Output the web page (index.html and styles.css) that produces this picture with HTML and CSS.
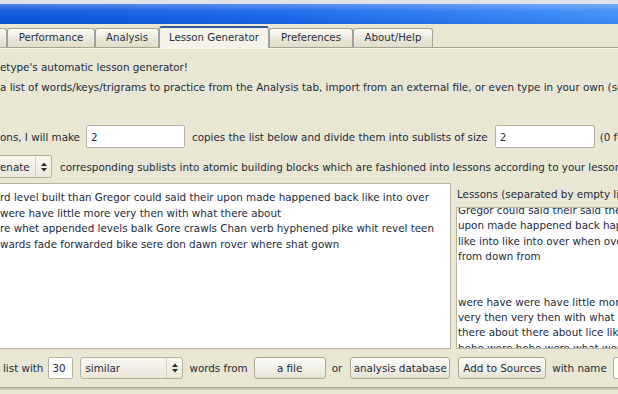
FILE: index.html
```html
<!DOCTYPE html>
<html>
<head>
<meta charset="utf-8">
<link rel="stylesheet" href="styles.css">
</head>
<body>
<div class="win">
  <div class="frame-top"></div>
  <div class="titlebar"></div>
  <div class="tabbar">
    <div class="tab tab-cut"></div>
    <div class="tab tab-perf">Performance</div>
    <div class="tab tab-analysis">Analysis</div>
    <div class="tab tab-active tab-lesson">Lesson Generator</div>
    <div class="tab tab-prefs">Preferences</div>
    <div class="tab tab-about">About/Help</div>
  </div>
  <div class="pane">
    <p class="line">etype's automatic lesson generator!</p>
    <p class="line">a list of words/keys/trigrams to practice from the Analysis tab, import from an external file, or even type in your own (separated by space).</p>
    <div class="row row-copies">
      <span class="label">ons, I will make</span>
      <input class="field field-copies" value="2">
      <span class="label">copies the list below and divide them into sublists of size</span>
      <input class="field field-size" value="2">
      <span class="label">(0 for no division).</span>
    </div>
    <div class="row row-mode">
      <div class="combo combo-mode">
        <span class="combo-text">enate</span>
        <span class="combo-btn">
          <svg width="6" height="10" viewBox="0 0 6 10"><path d="M0 4 L3 0.5 L6 4Z M0 6 L3 9.5 L6 6Z" fill="#2b2b2b"/></svg>
        </span>
      </div>
      <span class="label">corresponding sublists into atomic building blocks which are fashioned into lessons according to your lesson options.</span>
    </div>
    <div class="panels">
      <div class="textbox source">
        <div class="tline">rd level built than Gregor could said their upon made happened back like into over</div>
        <div class="tline">were have little more very then with what there about</div>
        <div class="tline">re whet appended levels balk Gore crawls Chan verb hyphened pike whit revel teen</div>
        <div class="tline">wards fade forwarded bike sere don dawn rover where shat gown</div>
      </div>
      <div class="lessons-col">
        <div class="lessons-label">Lessons (separated by empty lines):</div>
        <div class="textbox lessons">
          <div class="scroll">
            <div class="tline">Gregor could said their said their</div>
            <div class="tline">upon made happened back happened</div>
            <div class="tline">like into like into over when over</div>
            <div class="tline">from down from</div>
            <div class="tline">&nbsp;</div>
            <div class="tline">&nbsp;</div>
            <div class="tline">were have were have little more</div>
            <div class="tline">very then very then with what</div>
            <div class="tline">there about there about lice like</div>
            <div class="tline">hehe were hehe were what were</div>
          </div>
        </div>
      </div>
    </div>
    <div class="row row-bottom">
      <span class="label">list with</span>
      <input class="field field-count" value="30">
      <div class="combo combo-similar">
        <span class="combo-text">similar</span>
        <span class="combo-btn">
          <svg width="6" height="10" viewBox="0 0 6 10"><path d="M0 4 L3 0.5 L6 4Z M0 6 L3 9.5 L6 6Z" fill="#2b2b2b"/></svg>
        </span>
      </div>
      <span class="label">words from</span>
      <button class="btn btn-file">a file</button>
      <span class="label label-or">or</span>
      <button class="btn btn-db">analysis database</button>
      <button class="btn btn-add">Add to Sources</button>
      <span class="label">with name</span>
      <input class="field field-name" value="">
    </div>
    <div class="footer"></div>
  </div>
</div>
</body>
</html>
```

FILE: styles.css
```css
* { box-sizing: border-box; }
html, body { margin: 0; padding: 0; }
body { background: #e9e6d4; }

.win {
  width: 618px;
  height: 394px;
  overflow: hidden;
  background: #e9e6d4;
  font-family: "DejaVu Sans", sans-serif;
  font-size: 10px;
  color: #222a3a;
  display: flex;
  flex-direction: column;
}

.frame-top { flex: none; height: 4px; background: #dfe2ea; }
.titlebar {
  flex: none;
  height: 20px;
  background:
    linear-gradient(180deg, rgba(255,255,255,0.28) 0, rgba(255,255,255,0.05) 35%, rgba(0,0,0,0) 70%, rgba(0,0,40,0.08) 100%),
    linear-gradient(90deg, #0b56dc 0, #1a67ec 45%, #3f90f7 100%);
}

.tabbar {
  flex: none;
  margin-top: 2px;
  height: 22px;
  display: flex;
  align-items: flex-end;
  border-bottom: 1px solid #a5a392;
}
.tab {
  height: 19px;
  line-height: 18px;
  text-align: center;
  white-space: nowrap;
  border: 1px solid #9ea39e;
  border-bottom: none;
  border-radius: 3px 3px 0 0;
  background: linear-gradient(180deg, #fbfbf7 0, #e9e6d7 60%, #e0ddcb 100%);
  color: #2a3140;
  font-size: 10.2px;
}
.tab-cut { width: 7px; border-left: none; border-radius: 0 3px 0 0; }
.tab-perf { width: 88px; }
.tab-analysis { width: 64px; }
.tab-lesson { width: 110px; }
.tab-prefs { width: 84px; }
.tab-about { width: 80px; }
.tab-active {
  height: 22px;
  line-height: 19px;
  margin-bottom: -1px;
  background: #f4f2e9;
  border-top: 2px solid #2f5a9e;
}

.pane {
  flex: 1;
  display: flex;
  flex-direction: column;
  padding-top: 8px;
  border-top: 1px solid #f8f7f1;
  font-size: 10.35px;
}

.line {
  margin: 0;
  height: 20px;
  line-height: 20px;
  white-space: nowrap;
}

.row {
  display: flex;
  align-items: center;
  white-space: nowrap;
  flex: none;
}
.row-copies { margin-top: 28px; height: 23px; }
.row-mode { margin-top: 7px; height: 23px; }
.row-bottom { margin-top: 8px; height: 22px; padding-left: 3px; }

.label { flex: none; }

.field {
  flex: none;
  height: 23px;
  border: 1px solid #b4b1a2;
  border-radius: 2px;
  background: #fff;
  font: inherit;
  color: inherit;
  padding: 0 4px;
  margin: 0;
}
.field-copies { width: 99px; margin: 0 7px 0 6px; }
.field-size { width: 100px; margin: 0 5px 0 7px; }
.field-count { width: 25px; height: 22px; margin: 0 7px 0 5px; padding: 0 3px; }
.field-name { width: 40px; height: 22px; margin-left: 6px; }

.combo {
  flex: none;
  display: flex;
  align-items: center;
  height: 23px;
  border: 1px solid #b4b1a2;
  border-radius: 3px;
  background: linear-gradient(180deg, #f7f6f0 0, #ebe8da 100%);
}
.combo-text { flex: 1; padding-left: 4px; }
.combo-btn {
  display: flex;
  align-items: center;
  justify-content: center;
  width: 16px;
  height: 100%;
  border-left: 1px solid #d4d1c1;
}
.combo-mode { width: 52px; margin-right: 8px; border-left: none; border-radius: 0 3px 3px 0; }
.combo-mode .combo-text { padding-left: 0; }
.combo-similar { width: 103px; height: 22px; margin-right: 6px; }

.panels {
  flex: none;
  display: flex;
  gap: 5px;
  margin-top: 5px;
  height: 166px;
}
.textbox {
  background: #fff;
  border: 1px solid #b7b4a4;
  overflow: hidden;
  white-space: nowrap;
}
.source {
  width: 451px;
  flex: none;
  border-left: none;
  padding-top: 6px;
}
.tline { line-height: 15.6px; height: 15.6px; }

.lessons-col {
  flex: 1;
  display: flex;
  flex-direction: column;
  min-width: 0;
}
.lessons-label {
  flex: none;
  height: 24px;
  padding: 4px 0 0 1px;
  line-height: 14px;
  white-space: nowrap;
}
.lessons {
  flex: 1;
  border-right: none;
  padding-left: 1px;
}
.lessons .scroll { margin-top: -5px; }
.lessons .tline { line-height: 15.3px; height: 15.3px; }

.btn {
  flex: none;
  height: 22px;
  margin: 0;
  padding: 0;
  font: inherit;
  color: inherit;
  border: 1px solid #a9a696;
  border-radius: 3px;
  background: linear-gradient(180deg, #fbfbf8 0, #eeece2 70%, #e2dfd0 100%);
}
.btn-file { width: 72px; margin-left: 6px; }
.label-or { margin: 0 8px 0 6px; }
.btn-db { width: 100px; }
.btn-add { width: 88px; margin: 0 6px 0 8px; }

.footer {
  flex: none;
  margin-top: 8px;
  height: 3px;
  border-top: 1px solid #a9a692;
  background: #cdc9b5;
}
```
